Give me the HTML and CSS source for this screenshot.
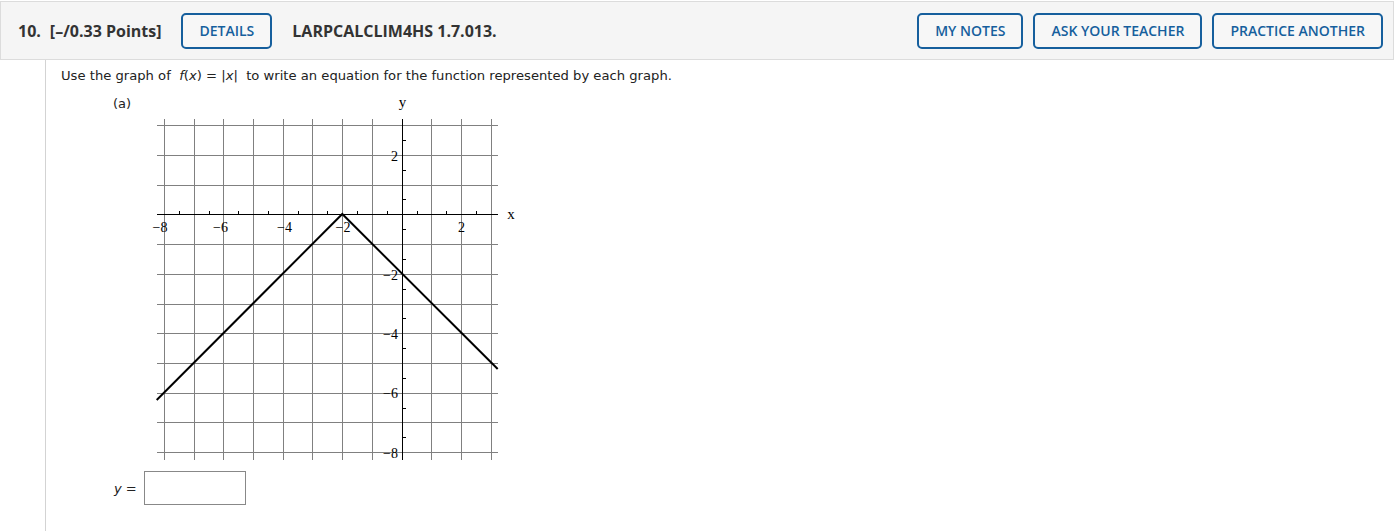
FILE: index.html
```html
<!DOCTYPE html>
<html lang="en">
<head>
<meta charset="utf-8">
<title>Question 10</title>
<link rel="stylesheet" href="styles.css">
</head>
<body>
<div class="question">
  <header class="q-head">
    <span class="q-num">10.</span>
    <span class="q-points">[–/0.33 Points]</span>
    <button class="btn btn-details">DETAILS</button>
    <span class="q-code">LARPCALCLIM4HS 1.7.013.</span>
    <div class="q-actions">
      <button class="btn">MY NOTES</button>
      <button class="btn">ASK YOUR TEACHER</button>
      <button class="btn">PRACTICE ANOTHER</button>
    </div>
  </header>
  <div class="q-body">
    <p class="prompt">Use the graph of &nbsp;<i>f</i>(<i>x</i>) = |<i>x</i>| &nbsp;to write an equation for the function represented by each graph.</p>
    <div class="part">
      <span class="part-label">(a)</span>
      <svg class="graph" width="390" height="375" viewBox="0 0 390 375" xmlns="http://www.w3.org/2000/svg">
        <g stroke="#808080" stroke-width="1" shape-rendering="crispEdges">
          <line x1="24.5" y1="26" x2="24.5" y2="367"/>
          <line x1="54.5" y1="26" x2="54.5" y2="367"/>
          <line x1="83.5" y1="26" x2="83.5" y2="367"/>
          <line x1="113.5" y1="26" x2="113.5" y2="367"/>
          <line x1="143.5" y1="26" x2="143.5" y2="367"/>
          <line x1="172.5" y1="26" x2="172.5" y2="367"/>
          <line x1="202.5" y1="26" x2="202.5" y2="367"/>
          <line x1="232.5" y1="26" x2="232.5" y2="367"/>
          <line x1="291.5" y1="26" x2="291.5" y2="367"/>
          <line x1="321.5" y1="26" x2="321.5" y2="367"/>
          <line x1="351.5" y1="26" x2="351.5" y2="367"/>
          <line x1="17" y1="32.5" x2="358" y2="32.5"/>
          <line x1="17" y1="62.5" x2="358" y2="62.5"/>
          <line x1="17" y1="92.5" x2="358" y2="92.5"/>
          <line x1="17" y1="151.5" x2="358" y2="151.5"/>
          <line x1="17" y1="181.5" x2="358" y2="181.5"/>
          <line x1="17" y1="211.5" x2="358" y2="211.5"/>
          <line x1="17" y1="240.5" x2="358" y2="240.5"/>
          <line x1="17" y1="270.5" x2="358" y2="270.5"/>
          <line x1="17" y1="300.5" x2="358" y2="300.5"/>
          <line x1="17" y1="329.5" x2="358" y2="329.5"/>
          <line x1="17" y1="359.5" x2="358" y2="359.5"/>
        </g>
        <g stroke="#000" stroke-width="1" shape-rendering="crispEdges">
          <line x1="17" y1="121.5" x2="358" y2="121.5"/>
          <line x1="262.5" y1="26" x2="262.5" y2="367"/>
          <line x1="39.5" y1="118" x2="39.5" y2="121"/>
          <line x1="69.5" y1="118" x2="69.5" y2="121"/>
          <line x1="98.5" y1="118" x2="98.5" y2="121"/>
          <line x1="128.5" y1="118" x2="128.5" y2="121"/>
          <line x1="158.5" y1="118" x2="158.5" y2="121"/>
          <line x1="187.5" y1="118" x2="187.5" y2="121"/>
          <line x1="217.5" y1="118" x2="217.5" y2="121"/>
          <line x1="247.5" y1="118" x2="247.5" y2="121"/>
          <line x1="277.5" y1="118" x2="277.5" y2="121"/>
          <line x1="306.5" y1="118" x2="306.5" y2="121"/>
          <line x1="336.5" y1="118" x2="336.5" y2="121"/>
          <line x1="263" y1="47.5" x2="266" y2="47.5"/>
          <line x1="263" y1="77.5" x2="266" y2="77.5"/>
          <line x1="263" y1="106.5" x2="266" y2="106.5"/>
          <line x1="263" y1="136.5" x2="266" y2="136.5"/>
          <line x1="263" y1="166.5" x2="266" y2="166.5"/>
          <line x1="263" y1="196.5" x2="266" y2="196.5"/>
          <line x1="263" y1="225.5" x2="266" y2="225.5"/>
          <line x1="263" y1="255.5" x2="266" y2="255.5"/>
          <line x1="263" y1="285.5" x2="266" y2="285.5"/>
          <line x1="263" y1="315.5" x2="266" y2="315.5"/>
          <line x1="263" y1="344.5" x2="266" y2="344.5"/>
        </g>
        <polyline points="16.7,307 202.3,121 357.7,276" fill="none" stroke="#000" stroke-width="2"/>
        <g class="ax-label" font-family="'Liberation Serif', serif" font-size="14" fill="#000">
          <text x="27.5" y="138.5" text-anchor="end">−8</text>
          <text x="88" y="138.5" text-anchor="end">−6</text>
          <text x="152" y="138.5" text-anchor="end">−4</text>
          <text x="210.5" y="138.5" text-anchor="end">−2</text>
          <text x="321.5" y="138.5" text-anchor="middle">2</text>
          <text x="258" y="67.5" text-anchor="end">2</text>
          <text x="258" y="186.5" text-anchor="end">−2</text>
          <text x="258" y="245.5" text-anchor="end">−4</text>
          <text x="258" y="305" text-anchor="end">−6</text>
          <text x="258" y="364.5" text-anchor="end">−8</text>
          <text x="371" y="126" text-anchor="middle" font-size="15">x</text>
          <text x="262.5" y="14" text-anchor="middle" font-size="15">y</text>
        </g>
      </svg>
    </div>
    <div class="answer">
      <span class="answer-label"><i>y</i> =</span>
      <span class="answer-box"></span>
    </div>
  </div>
</div>
</body>
</html>
```
FILE: styles.css
```css
html, body {
  margin: 0;
  padding: 0;
  background: #fff;
}
body {
  padding-top: 1px;
  font-family: "Open Sans", "Noto Sans", sans-serif;
  color: #333;
}
.question {
  width: 1394px;
}
.q-head {
  display: flex;
  align-items: center;
  height: 57px;
  padding: 0 10px 0 17px;
  background: #f5f5f5;
  border: 1px solid #dcdcdc;
}
.q-num {
  font-weight: 700;
  font-size: 16px;
  margin-right: 9px;
}
.q-points {
  font-weight: 700;
  font-size: 16px;
  margin-right: 20px;
}
.q-code {
  font-weight: 700;
  font-size: 16px;
  margin-left: 20px;
}
.btn {
  height: 36px;
  padding: 0 16px;
  border: 2px solid #165f9d;
  border-radius: 5px;
  background: #f7f7f7;
  color: #165f9d;
  font-family: "Open Sans", "Noto Sans", sans-serif;
  font-weight: 600;
  font-size: 14px;
  cursor: pointer;
}
.q-actions {
  margin-left: auto;
  display: flex;
  gap: 10px;
}
.q-body {
  margin-left: 45px;
  border-left: 1px solid #d3d3d3;
  padding-left: 15px;
  min-height: 471px;
  box-sizing: border-box;
  font-family: "DejaVu Sans", Verdana, sans-serif;
  font-size: 13px;
  color: #222;
}
.prompt {
  margin: 0;
  padding-top: 7px;
  line-height: 18px;
  font-size: 13.15px;
}
.part {
  display: flex;
  align-items: flex-start;
  margin-top: 8px;
  padding-left: 52px;
}
.part-label {
  width: 27px;
  line-height: 18px;
  padding-top: 2px;
}
.graph {
  display: block;
}
.answer {
  display: flex;
  align-items: center;
  gap: 7px;
  margin-top: 3px;
  padding-left: 53px;
}
.answer-box {
  display: block;
  width: 100px;
  height: 32px;
  border: 1px solid #888;
  background: #fff;
}
```
